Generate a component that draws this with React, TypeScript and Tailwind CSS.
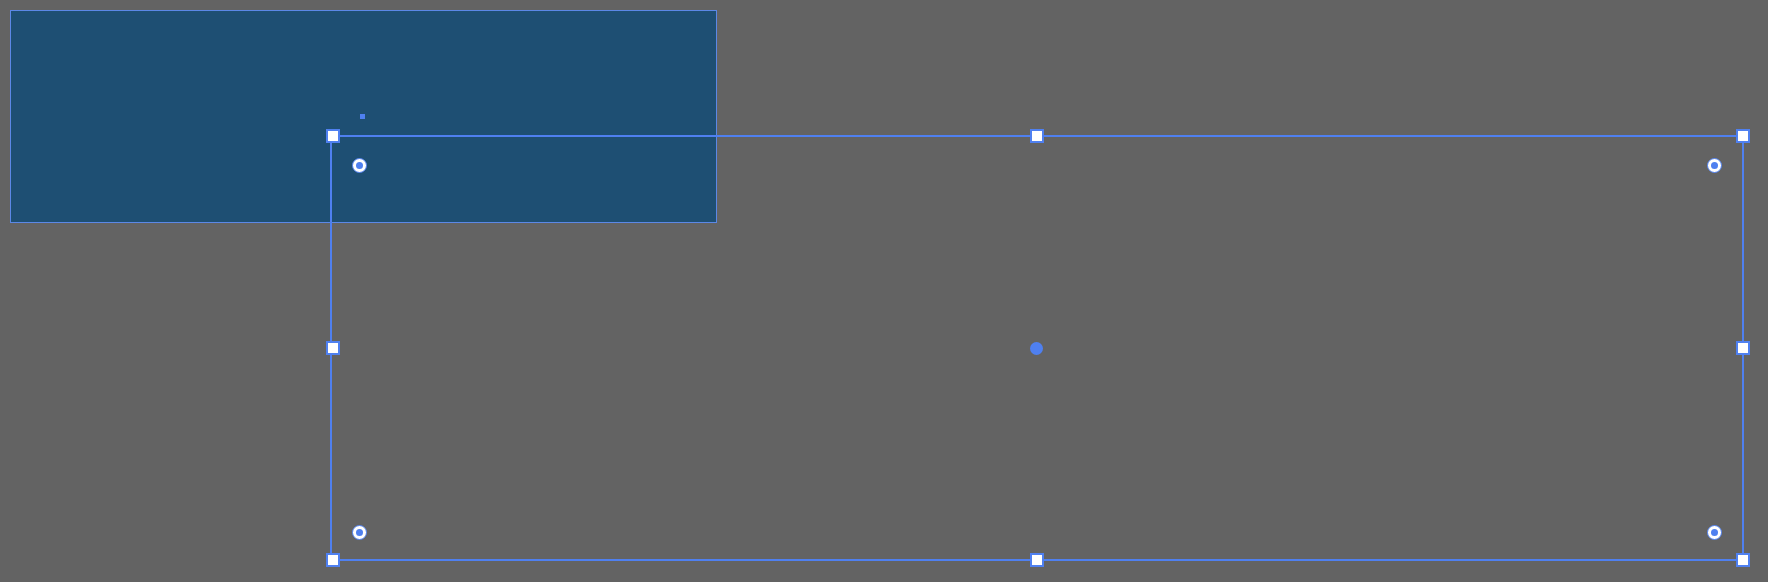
import React from "react";

const Handle = ({ x, y }: { x: number; y: number }) => (
  <div
    className="absolute w-[14px] h-[14px] bg-white border-2 border-[#4f80f0] box-border"
    style={{ left: x - 7, top: y - 7 }}
  />
);

const Radius = ({ x, y }: { x: number; y: number }) => (
  <div
    className="absolute w-[15px] h-[15px] rounded-full bg-white border border-[#4f80f0] box-border flex items-center justify-center"
    style={{ left: x - 7.5, top: y - 7.5 }}
  >
    <div className="w-[7px] h-[7px] rounded-full bg-[#4f80f0]" />
  </div>
);

export default function App() {
  return (
    <div className="relative w-[1768px] h-[582px] bg-[#636363] overflow-hidden">
      {/* existing shape */}
      <div className="absolute left-[10px] top-[10px] w-[707px] h-[213px] bg-[#1e4f73] border border-[#5c88e6] box-border" />
      {/* tiny anchor */}
      <div className="absolute left-[360px] top-[114px] w-[5px] h-[5px] bg-[#4f80f0]" />
      {/* selection box */}
      <div className="absolute left-[330px] top-[135px] w-[1414px] h-[426px] border-2 border-[#4f80f0] box-border" />
      {/* corner/side handles */}
      <Handle x={333} y={136} />
      <Handle x={1037} y={136} />
      <Handle x={1743} y={136} />
      <Handle x={333} y={348} />
      <Handle x={1743} y={348} />
      <Handle x={333} y={560} />
      <Handle x={1037} y={560} />
      <Handle x={1743} y={560} />
      {/* radius handles */}
      <Radius x={359.5} y={165} />
      <Radius x={1714.5} y={165} />
      <Radius x={359.5} y={532} />
      <Radius x={1714.5} y={532} />
      {/* center dot */}
      <div className="absolute left-[1030px] top-[342px] w-[13px] h-[13px] rounded-full bg-[#4f80f0]" />
    </div>
  );
}
